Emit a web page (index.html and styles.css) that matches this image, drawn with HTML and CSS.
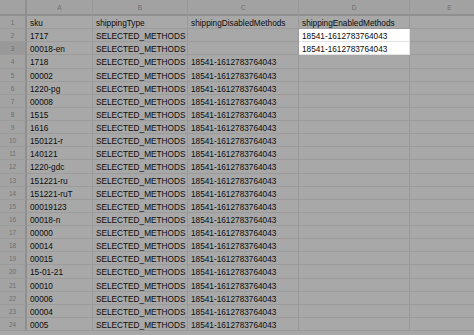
FILE: index.html
```html
<!DOCTYPE html>
<html lang="en">
  <head>
    <meta charset="UTF-8" />
    <meta name="viewport" content="width=device-width, initial-scale=1.0" />
    <title>Shipping export</title>
    <link rel="stylesheet" href="styles.css">
  </head>
  <body>
    <div class="sheet" id="sheet">
      <div class="corner"></div>
      <div class="col-head">A</div>
      <div class="col-head">B</div>
      <div class="col-head">C</div>
      <div class="col-head">D</div>
      <div class="col-head">E</div>
    </div>

    <script>
      const methodId = "18541-1612783764043";
      const rows = [
        ["sku", "shippingType", "shippingDisabledMethods", "shippingEnabledMethods"],
        ["1717", "SELECTED_METHODS", "", methodId],
        ["00018-en", "SELECTED_METHODS", "", methodId],
        ["1718"], ["00002"], ["1220-pg"], ["00008"], ["1515"], ["1616"],
        ["150121-r"], ["140121"], ["1220-gdc"], ["151221-ru"], ["151221-ruT"],
        ["00019123"], ["00018-n"], ["00000"], ["00014"], ["00015"],
        ["15-01-21"], ["00010"], ["00006"], ["00004"], ["0005"],
      ];

      const sheet = document.getElementById("sheet");

      rows.forEach((row, i) => {
        // rows after the first two enabled-method rows share the same values
        const cells = row.length > 1 ? row : [row[0], "SELECTED_METHODS", methodId, ""];
        const num = document.createElement("div");
        num.className = "row-head" + (i === 2 ? " picked" : "");
        num.textContent = i + 1;
        sheet.appendChild(num);

        cells.concat([""]).forEach((value, c) => {
          const cell = document.createElement("div");
          cell.className = "cell";
          if (c === 3 && (i === 1 || i === 2)) cell.classList.add("filled");
          cell.textContent = value;
          sheet.appendChild(cell);
        });
      });
    </script>
  </body>
</html>
```

FILE: styles.css
```css
* {
  margin: 0;
  padding: 0;
  box-sizing: border-box;
}

body {
  font-family: "Liberation Sans", Arial, Helvetica, sans-serif;
  background: #a8a8a8;
  color: #0c0c0c;
  overflow: hidden;
}

.sheet {
  display: grid;
  grid-template-columns: 27px 66px 95px 111px 111px 80px;
  grid-template-rows: 16px repeat(24, 13.125px) 20px;
  width: 490px;
}

.corner,
.col-head,
.row-head,
.cell {
  border-right: 1px solid #999999;
  border-bottom: 1px solid #9b9b9b;
  white-space: nowrap;
  overflow: hidden;
}

.corner {
  background: #a2a2a2;
  border-right: 2px solid #8f8f8f;
  border-bottom: 2px solid #8f8f8f;
}

.col-head {
  background: #a2a2a2;
  color: #6e6e6e;
  font-size: 6.5px;
  text-align: center;
  line-height: 15px;
  border-bottom: 2px solid #8f8f8f;
}

.row-head {
  background: #a3a3a3;
  color: #6e6e6e;
  font-size: 6.5px;
  text-align: center;
  line-height: 13px;
  border-right: 2px solid #8f8f8f;
}

.row-head.picked {
  background: #999999;
}

.cell {
  font-size: 8.25px;
  line-height: 13px;
  padding-left: 3px;
  padding-top: 1px;
  overflow: visible;
}

.cell.filled {
  background: #ffffff;
  border-bottom-color: #e2e2e2;
  border-right-color: #e2e2e2;
}
```
